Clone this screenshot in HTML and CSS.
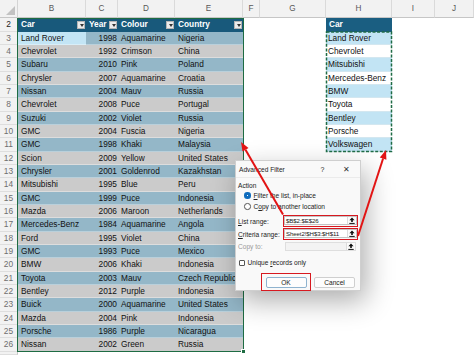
FILE: index.html
```html
<!DOCTYPE html>
<html>
<head>
<meta charset="utf-8">
<link rel="stylesheet" href="styles.css">
</head>
<body>
<div class="sheet">
  <div class="corner"></div><div class="ch">B</div><div class="ch">C</div><div class="ch">D</div><div class="ch">E</div><div class="ch">F</div><div class="ch">G</div><div class="ch">H</div><div class="ch">I</div><div class="ch">J</div>

  <div class="rn top">2</div><div class="hd">Car<span class="dd"></span></div><div class="hd">Year<span class="dd"></span></div><div class="hd">Colour<span class="dd"></span></div><div class="hd">Country<span class="dd"></span></div><div></div><div></div><div class="hd hh">Car</div><div></div><div></div>
  <div class="rn">3</div><div class="c act">Land Rover</div><div class="c b n">1998</div><div class="c b">Aquamarine</div><div class="c b">Nigeria</div><div></div><div></div><div class="hc lb">Land Rover</div><div></div><div></div>
  <div class="rn">4</div><div class="c g">Chevrolet</div><div class="c g n">1992</div><div class="c g">Crimson</div><div class="c g">China</div><div></div><div></div><div class="hc w">Chevrolet</div><div></div><div></div>
  <div class="rn">5</div><div class="c b">Subaru</div><div class="c b n">2010</div><div class="c b">Pink</div><div class="c b">Poland</div><div></div><div></div><div class="hc lb">Mitsubishi</div><div></div><div></div>
  <div class="rn">6</div><div class="c g">Chrysler</div><div class="c g n">2007</div><div class="c g">Aquamarine</div><div class="c g">Croatia</div><div></div><div></div><div class="hc w">Mercedes-Benz</div><div></div><div></div>
  <div class="rn">7</div><div class="c b">Nissan</div><div class="c b n">2004</div><div class="c b">Mauv</div><div class="c b">Russia</div><div></div><div></div><div class="hc lb">BMW</div><div></div><div></div>
  <div class="rn">8</div><div class="c g">Chevrolet</div><div class="c g n">2008</div><div class="c g">Puce</div><div class="c g">Portugal</div><div></div><div></div><div class="hc w">Toyota</div><div></div><div></div>
  <div class="rn">9</div><div class="c b">Suzuki</div><div class="c b n">2002</div><div class="c b">Violet</div><div class="c b">Russia</div><div></div><div></div><div class="hc lb">Bentley</div><div></div><div></div>
  <div class="rn">10</div><div class="c g">GMC</div><div class="c g n">2004</div><div class="c g">Fuscia</div><div class="c g">Nigeria</div><div></div><div></div><div class="hc w">Porsche</div><div></div><div></div>
  <div class="rn">11</div><div class="c b">GMC</div><div class="c b n">1998</div><div class="c b">Khaki</div><div class="c b">Malaysia</div><div></div><div></div><div class="hc lb">Volkswagen</div><div></div><div></div>
  <div class="rn">12</div><div class="c g">Scion</div><div class="c g n">2009</div><div class="c g">Yellow</div><div class="c g">United States</div><div></div><div></div><div></div><div></div><div></div>
  <div class="rn">13</div><div class="c b">Chrysler</div><div class="c b n">2001</div><div class="c b">Goldenrod</div><div class="c b">Kazakhstan</div><div></div><div></div><div></div><div></div><div></div>
  <div class="rn">14</div><div class="c g">Mitsubishi</div><div class="c g n">1995</div><div class="c g">Blue</div><div class="c g">Peru</div><div></div><div></div><div></div><div></div><div></div>
  <div class="rn">15</div><div class="c b">GMC</div><div class="c b n">1999</div><div class="c b">Puce</div><div class="c b">Indonesia</div><div></div><div></div><div></div><div></div><div></div>
  <div class="rn">16</div><div class="c g">Mazda</div><div class="c g n">2006</div><div class="c g">Maroon</div><div class="c g">Netherlands</div><div></div><div></div><div></div><div></div><div></div>
  <div class="rn">17</div><div class="c b">Mercedes-Benz</div><div class="c b n">1984</div><div class="c b">Aquamarine</div><div class="c b">Angola</div><div></div><div></div><div></div><div></div><div></div>
  <div class="rn">18</div><div class="c g">Ford</div><div class="c g n">1995</div><div class="c g">Violet</div><div class="c g">China</div><div></div><div></div><div></div><div></div><div></div>
  <div class="rn">19</div><div class="c b">GMC</div><div class="c b n">1993</div><div class="c b">Puce</div><div class="c b">Mexico</div><div></div><div></div><div></div><div></div><div></div>
  <div class="rn">20</div><div class="c g">BMW</div><div class="c g n">2006</div><div class="c g">Khaki</div><div class="c g">Indonesia</div><div></div><div></div><div></div><div></div><div></div>
  <div class="rn">21</div><div class="c b">Toyota</div><div class="c b n">2003</div><div class="c b">Mauv</div><div class="c b">Czech Republic</div><div></div><div></div><div></div><div></div><div></div>
  <div class="rn">22</div><div class="c g">Bentley</div><div class="c g n">2012</div><div class="c g">Purple</div><div class="c g">Indonesia</div><div></div><div></div><div></div><div></div><div></div>
  <div class="rn">23</div><div class="c b">Buick</div><div class="c b n">2000</div><div class="c b">Aquamarine</div><div class="c b">United States</div><div></div><div></div><div></div><div></div><div></div>
  <div class="rn">24</div><div class="c g">Mazda</div><div class="c g n">2004</div><div class="c g">Pink</div><div class="c g">Indonesia</div><div></div><div></div><div></div><div></div><div></div>
  <div class="rn">25</div><div class="c b">Porsche</div><div class="c b n">1986</div><div class="c b">Purple</div><div class="c b">Nicaragua</div><div></div><div></div><div></div><div></div><div></div>
  <div class="rn">26</div><div class="c g">Nissan</div><div class="c g n">2002</div><div class="c g">Green</div><div class="c g">Russia</div><div></div><div></div><div></div><div></div><div></div>
  <div class="rn"></div>
</div>

<div class="sel"><span class="handle"></span></div>

<div class="dlg">
  <div class="dlg-title"><span class="tt">Advanced Filter</span><span class="q">?</span><span class="x">✕</span></div>
  <div class="dlg-body">
    <div class="lbl">Action</div>
    <div class="radio"><span class="rd on"></span><span><u>F</u>ilter the list, in-place</span></div>
    <div class="radio"><span class="rd"></span><span>C<u>o</u>py to another location</span></div>
    <div class="field first"><span class="fl"><u>L</u>ist range:</span><span class="box hl"><span class="inp"><span class="val">$B$2:$E$26</span><span class="pick"><svg width="6" height="7" viewBox="0 0 6 7"><path d="M3 0.5 L5.6 3.2 H3.8 V5 H2.2 V3.2 H0.4 Z" fill="#111"/><rect x="0.3" y="5.9" width="5.4" height="1" fill="#111"/></svg></span></span></span></div>
    <div class="field"><span class="fl"><u>C</u>riteria range:</span><span class="box hl"><span class="inp"><span class="val">Sheet2!$H$3:$H$11</span><span class="pick"><svg width="6" height="7" viewBox="0 0 6 7"><path d="M3 0.5 L5.6 3.2 H3.8 V5 H2.2 V3.2 H0.4 Z" fill="#111"/><rect x="0.3" y="5.9" width="5.4" height="1" fill="#111"/></svg></span></span></span></div>
    <div class="field"><span class="fl dis">Copy to:</span><span class="box"><span class="inp off"><span class="val"></span><span class="pick"><svg width="6" height="7" viewBox="0 0 6 7"><path d="M3 0.5 L5.6 3.2 H3.8 V5 H2.2 V3.2 H0.4 Z" fill="#111"/><rect x="0.3" y="5.9" width="5.4" height="1" fill="#111"/></svg></span></span></span></div>
    <div class="check"><span class="cb"></span><span>Unique <u>r</u>ecords only</span></div>
    <div class="btns"><span class="okwrap"><span class="btn ok">OK</span></span><span class="btn">Cancel</span></div>
  </div>
</div>

<svg class="arrows" width="474" height="355" viewBox="0 0 474 355">
  <rect x="326.5" y="32" width="65" height="119.5" fill="none" stroke="#1f6b45" stroke-width="1.5" stroke-dasharray="3 1.6"/>
  <line x1="283" y1="214.5" x2="245.5" y2="149.8" stroke="#e21414" stroke-width="2"/>
  <polygon points="241,142 248.5,148 242.5,151.5" fill="#e21414"/>
  <line x1="358" y1="236" x2="383.1" y2="158.5" stroke="#e21414" stroke-width="2"/>
  <polygon points="386,150 386.4,159.7 379.8,157.4" fill="#e21414"/>
</svg>
</body>
</html>
```

FILE: styles.css
```css
* { box-sizing: border-box; margin: 0; padding: 0; }
html, body { width: 474px; height: 355px; overflow: hidden; background: #fff; }
body {
  position: relative;
  font-family: "Liberation Sans", Arial, sans-serif;
  font-size: 8.3px;
  color: #111;
}

.sheet {
  display: grid;
  grid-template-columns: 18px 68px 32px 57px 68px 17px 66px 66px 43px 39px;
  grid-template-rows: 18.33px repeat(25, 13.33px) 1fr;
  height: 355px;
}
.sheet > div {
  overflow: hidden;
  white-space: nowrap;
  line-height: 13px;
}

.corner {
  background: #f2f2f2;
  border-right: 1px solid #d4d4d4;
  border-bottom: 1px solid #c6c6c6;
  position: relative;
}
.corner::after {
  content: "";
  position: absolute;
  right: 2px;
  bottom: 2px;
  border-left: 9px solid transparent;
  border-bottom: 9px solid #c2c2c2;
}
.ch {
  background: #f2f2f2;
  color: #595959;
  text-align: center;
  line-height: 18px !important;
  font-size: 8.2px;
  border-right: 1px solid #dadada;
  border-bottom: 1px solid #c6c6c6;
}
.rn {
  background: #f2f2f2;
  color: #6e6e6e;
  text-align: center;
  font-size: 8.4px;
  border-right: 1px solid #c6c6c6;
  border-bottom: 1px solid #dedede;
}
.rn.top { color: #222; }

.hd {
  background: #18597b;
  color: #fff;
  font-weight: bold;
  display: flex;
  align-items: center;
  justify-content: space-between;
  padding: 0 1px 0 3px;
}
.hh { background: #1a5e81; }
.dd {
  width: 8px;
  height: 8px;
  background: #ececec;
  border: 1px solid #b5b5b5;
  position: relative;
  flex: none;
}
.dd::after {
  content: "";
  position: absolute;
  left: 1.5px;
  top: 2px;
  border-left: 2.5px solid transparent;
  border-right: 2.5px solid transparent;
  border-top: 3px solid #333;
}

.c {
  padding-left: 3px;
  border-bottom: 1px solid rgba(255, 255, 255, 0.35);
}
.c.n { text-align: right; padding: 0 1px 0 0; }
.b { background: #94b7c8; }
.g { background: #cbcbcb; }
.act { background: #c3e5f5; }

.hc {
  padding-left: 2px;
  border-bottom: 1px solid #d3e7f0;
}
.lb { background: #c2e4f4; }
.w { background: #fff; }

.sel {
  position: absolute;
  left: 17px;
  top: 18.3px;
  width: 226.5px;
  height: 333.6px;
  border: 1.5px solid #1e6c43;
  pointer-events: none;
}
.handle {
  position: absolute;
  right: -3.5px;
  bottom: -3.5px;
  width: 5px;
  height: 5px;
  background: #1e6c43;
  border: 1px solid #fff;
}

/* dialog */
.dlg {
  position: absolute;
  left: 234.5px;
  top: 160px;
  width: 126px;
  height: 131px;
  background: #f9f9f9;
  border: 1px solid #cfcfcf;
  box-shadow: 5px 10px 26px rgba(0, 0, 0, 0.32);
  font-size: 6.6px;
  color: #222;
}
.dlg-title {
  height: 17px;
  display: flex;
  align-items: center;
  padding: 0 0 0 3.5px;
  border-bottom: 1px solid #ebebeb;
}
.tt { flex: 1; }
.q { width: 10px; text-align: center; margin-right: 14px; font-size: 7px; }
.x { width: 10px; text-align: center; margin-right: 8px; font-size: 7.5px; color: #333; }

.dlg-body { padding: 2px 3px 0 2.5px; }
.lbl { line-height: 9px; margin-top: 1px; }
.radio {
  display: flex;
  align-items: center;
  gap: 3px;
  height: 11px;
  padding-left: 6px;
}
.radio:first-of-type { margin-top: 2px; }
.rd {
  width: 6.5px;
  height: 6.5px;
  border-radius: 50%;
  border: 1px solid #555;
  background: #fff;
  flex: none;
}
.rd.on {
  border: 2px solid #0f6cbd;
  background: radial-gradient(circle, #fff 0 35%, #0f6cbd 40%);
}

.field {
  display: flex;
  align-items: center;
  height: 12.8px;
}
.field.first { margin-top: 3px; }
.fl { width: 45px; flex: none; }
.fl.dis { color: #9a9a9a; }
.box {
  width: 75px;
  height: 12.2px;
  padding: 1.6px;
  flex: none;
}
.box.hl { border: 1.6px solid #d71920; padding: 0; }
.inp {
  display: flex;
  height: 9px;
  background: #fff;
  border: 1px solid #c4c4c4;
  align-items: center;
}
.inp.off { background: #f3f3f3; border-color: #dedede; }
.val {
  flex: 1;
  padding-left: 1px;
  font-size: 6.1px;
  letter-spacing: -0.1px;
  white-space: nowrap;
  overflow: hidden;
}
.pick {
  width: 9px;
  height: 100%;
  flex: none;
  display: flex;
  align-items: center;
  justify-content: center;
  border-left: 1px solid #dcdcdc;
  background: #fbfbfb;
}

.check {
  display: flex;
  align-items: center;
  gap: 2.5px;
  height: 11px;
  margin-top: 4px;
  padding-left: 0.5px;
}
.cb {
  width: 6.5px;
  height: 6.5px;
  border: 1px solid #555;
  background: #fff;
  border-radius: 1px;
}
.btns {
  display: flex;
  align-items: center;
  justify-content: flex-end;
  gap: 3px;
  margin-top: 5px;
  padding-right: 1.5px;
}
.okwrap {
  border: 1.6px solid #d71920;
  padding: 2.2px 3.5px;
  display: flex;
}
.btn {
  width: 41px;
  height: 11px;
  display: flex;
  align-items: center;
  justify-content: center;
  background: #fdfdfd;
  border: 1px solid #cfcfcf;
  border-radius: 2px;
}
.btn.ok { border-color: #8fb3cf; }

.arrows {
  position: absolute;
  left: 0;
  top: 0;
  pointer-events: none;
}
```
